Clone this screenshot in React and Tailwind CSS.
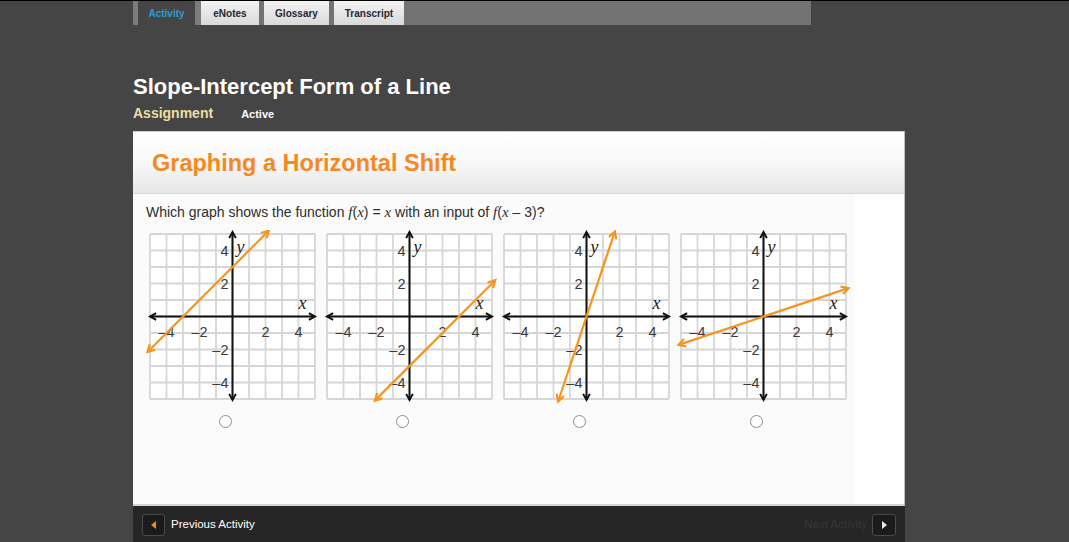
import React from "react";

const CELL = 16.5;
const PAD = 4;
const px = (x) => PAD + (x + 5) * CELL;
const py = (y) => PAD + (5 - y) * CELL;

const chevron = (tx, ty, angle, len = 7, spread = 0.45) => {
  const back = angle + Math.PI;
  const a = back - spread;
  const b = back + spread;
  return `${tx + len * Math.cos(a)},${ty + len * Math.sin(a)} ${tx},${ty} ${tx + len * Math.cos(b)},${ty + len * Math.sin(b)}`;
};

const graphs = [
  { from: [-5.15, -2.15], to: [2.2, 5.2] },
  { from: [-2.1, -5.1], to: [5.2, 2.2] },
  { from: [-1.72, -5.15], to: [1.72, 5.15] },
  { from: [-5.15, -1.72], to: [5.15, 1.72] },
];

const Graph = ({ from, to }) => {
  const x1 = px(from[0]);
  const y1 = py(from[1]);
  const x2 = px(to[0]);
  const y2 = py(to[1]);
  const ang = Math.atan2(y2 - y1, x2 - x1);
  const ticks = [-5, -4, -3, -2, -1, 0, 1, 2, 3, 4, 5];
  const ox = px(0);
  const oy = py(0);

  return (
    <svg width="176" height="176" viewBox="0 0 176 176">
      <rect x={PAD} y={PAD} width={CELL * 10} height={CELL * 10} fill="#ffffff" />
      {ticks.map((t) => (
        <g key={t}>
          <line x1={px(t)} y1={py(5)} x2={px(t)} y2={py(-5)} stroke="#d6d6d6" strokeWidth="1.8" />
          <line x1={px(-5)} y1={py(t)} x2={px(5)} y2={py(t)} stroke="#d6d6d6" strokeWidth="1.8" />
        </g>
      ))}

      {/* axes */}
      <line x1={px(-5) + 1} y1={oy} x2={px(5) - 1} y2={oy} stroke="#111" strokeWidth="2" />
      <line x1={ox} y1={py(5) - 2} x2={ox} y2={py(-5) + 1} stroke="#111" strokeWidth="2" />
      <polyline points={chevron(px(5), oy, 0, 7, 0.5)} fill="none" stroke="#111" strokeWidth="2" />
      <polyline points={chevron(px(-5), oy, Math.PI, 7, 0.5)} fill="none" stroke="#111" strokeWidth="2" />
      <polyline points={chevron(ox, py(5) - 2, -Math.PI / 2, 7, 0.5)} fill="none" stroke="#111" strokeWidth="2" />
      <polyline points={chevron(ox, py(-5) + 1, Math.PI / 2, 7, 0.5)} fill="none" stroke="#111" strokeWidth="2" />

      {/* labels */}
      <g fontFamily="'Liberation Sans', Arial, sans-serif" fontSize="14.5" fill="#3a3a3a">
        <text x={ox - 4} y={py(4) + 5} textAnchor="end">4</text>
        <text x={ox - 4} y={py(2) + 5} textAnchor="end">2</text>
        <text x={ox - 4} y={py(-2) + 5} textAnchor="end">–2</text>
        <text x={ox - 4} y={py(-4) + 5} textAnchor="end">–4</text>
        <text x={px(-4)} y={oy + 20} textAnchor="middle">–4</text>
        <text x={px(-2)} y={oy + 20} textAnchor="middle">–2</text>
        <text x={px(2)} y={oy + 20} textAnchor="middle">2</text>
        <text x={px(4)} y={oy + 20} textAnchor="middle">4</text>
      </g>
      <g fontFamily="'Liberation Serif', 'Times New Roman', serif" fontStyle="italic" fontSize="18" fill="#222">
        <text x={px(4)} y={oy - 8}>x</text>
        <text x={ox + 4} y={py(4) + 2}>y</text>
      </g>

      {/* function line */}
      <line x1={x1} y1={y1} x2={x2} y2={y2} stroke="#f7931e" strokeWidth="2.2" />
      <polyline points={chevron(x2, y2, ang, 8, 0.5)} fill="none" stroke="#f7931e" strokeWidth="2.2" />
      <polyline points={chevron(x1, y1, ang + Math.PI, 8, 0.5)} fill="none" stroke="#f7931e" strokeWidth="2.2" />
    </svg>
  );
};

const Math1 = ({ children }) => (
  <span className="italic font-['Liberation_Serif','Times_New_Roman',serif] text-[15px]">{children}</span>
);

export default function App() {
  return (
    <div className="w-[1069px] h-[542px] overflow-hidden bg-[#454545] border-t border-black font-['Liberation_Sans',Arial,sans-serif]">
      {/* tab bar */}
      <div className="ml-[133px] w-[678px] h-[24px] bg-[#737373] flex text-[10px] font-bold">
        <div className="w-[5px] bg-[#7c7c7c]" />
        <div className="w-[57px] bg-[#454545] flex items-center justify-center text-[#2c9fd3]">Activity</div>
        <div className="w-[6px] bg-[#7c7c7c]" />
        <div className="w-[58px] bg-gradient-to-b from-[#f3f3f3] to-[#d9d9d9] flex items-center justify-center text-[#1d2733]">eNotes</div>
        <div className="w-[5px]" />
        <div className="w-[65px] bg-gradient-to-b from-[#f3f3f3] to-[#d9d9d9] flex items-center justify-center text-[#1d2733]">Glossary</div>
        <div className="w-[5px]" />
        <div className="w-[70px] bg-gradient-to-b from-[#f3f3f3] to-[#d9d9d9] flex items-center justify-center text-[#1d2733]">Transcript</div>
      </div>

      {/* title */}
      <div className="ml-[133px] mt-[49px]">
        <h1 className="text-[22px] leading-[26px] font-bold text-white">Slope-Intercept Form of a Line</h1>
        <div className="mt-[4px] flex items-baseline gap-[28px] leading-[18px]">
          <span className="text-[14px] font-bold text-[#ecdfa2]">Assignment</span>
          <span className="text-[11px] font-bold text-white">Active</span>
        </div>
      </div>

      {/* card */}
      <div className="ml-[133px] mt-[8px] w-[772px]">
        <div className="bg-white border-t border-[#cfcfcf] border-r border-r-[#bdbdbd] h-[375px] flex flex-col">
          <div className="h-[62px] pl-[19px] pt-[17px] bg-gradient-to-b from-white via-[#f8f8f8] to-[#e6e6e6] border-b border-[#d6d6d6]">
            <h2 className="text-[23.5px] leading-[28px] font-bold text-[#f5891f]">Graphing a Horizontal Shift</h2>
          </div>
          <div className="flex-1 flex border-b-2 border-[#d4d4d4]">
            <div className="w-[722px] bg-[#fbfbfb]">
              <p className="pl-[13px] pt-[8px] text-[14px] leading-[20px] text-[#2d2d2d]">
                Which graph shows the function <Math1>f</Math1>(<Math1>x</Math1>) = <Math1>x</Math1> with an input of{" "}
                <Math1>f</Math1>(<Math1>x</Math1> – 3)?
              </p>
              <div className="pl-[4px] mt-[8px] flex">
                {graphs.map((g, i) => (
                  <div key={i} className="w-[177px] flex flex-col">
                    <div className="ml-[9px]">
                      <Graph from={g.from} to={g.to} />
                    </div>
                    <div className="mt-[9px] self-center w-[13px] h-[13px] rounded-full border-[1.5px] border-[#8e8e8e] bg-white" />
                  </div>
                ))}
              </div>
            </div>
            <div className="flex-1 bg-white" />
          </div>
        </div>

        {/* footer */}
        <div className="h-[37px] bg-[#262626] flex items-center justify-between px-[9px]">
          <div className="flex items-center gap-[6px]">
            <div className="w-[23px] h-[22px] rounded-[3px] border border-[#4a4a4a] bg-[#1b1b1b] flex items-center justify-center">
              <div className="w-0 h-0 border-y-[4px] border-y-transparent border-r-[5px] border-r-[#f5891f]" />
            </div>
            <span className="text-[11.5px] text-white">Previous Activity</span>
          </div>
          <div className="flex items-center gap-[5px]">
            <span className="text-[11.5px] text-[#383838]">Next Activity</span>
            <div className="w-[24px] h-[22px] rounded-[3px] border border-[#4a4a4a] bg-[#1b1b1b] flex items-center justify-center">
              <div className="w-0 h-0 border-y-[4px] border-y-transparent border-l-[5px] border-l-[#e8e8e8]" />
            </div>
          </div>
        </div>
      </div>
    </div>
  );
}
